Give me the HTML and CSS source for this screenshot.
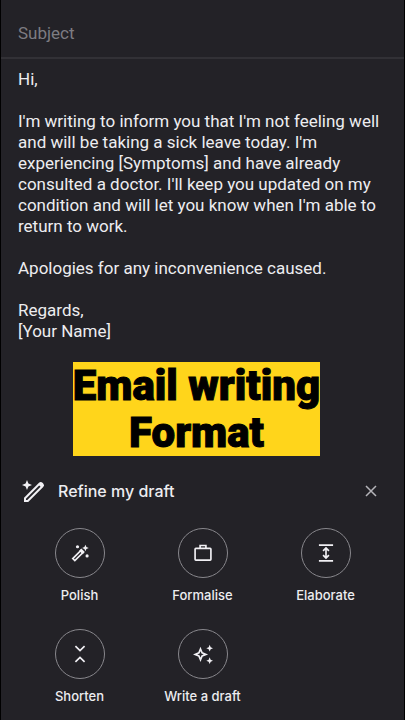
FILE: index.html
```html
<!DOCTYPE html>
<html lang="en">
<head>
<meta charset="utf-8">
<meta name="viewport" content="width=device-width, initial-scale=1">
<title>Compose</title>
<link rel="stylesheet" href="styles.css">
</head>
<body>
<main class="compose">
  <div class="subject">
    <input class="subject-input" type="text" placeholder="Subject" aria-label="Subject">
  </div>
  <textarea class="message" rows="13" aria-label="Message" spellcheck="false">Hi,

I'm writing to inform you that I'm not feeling well and will be taking a sick leave today. I'm experiencing [Symptoms] and have already consulted a doctor. I'll keep you updated on my condition and will let you know when I'm able to return to work.

Apologies for any inconvenience caused.

Regards,
[Your Name]</textarea>
  <div class="caption-row">
    <h1 class="caption">Email writing<br>Format</h1>
  </div>
  <section class="refine" aria-labelledby="refine-title">
    <header class="refine-head">
      <svg class="refine-icon" viewBox="0 0 24 24" aria-hidden="true">
        <path class="solid" d="M5 1 6.400 4.600 10 6 6.400 7.400 5 11 3.600 7.400 0 6 3.600 4.600z"/>
        <path class="line" d="M3 19.200 17.700 4.500a1.500 1.500 0 0 1 2.100 0l.7.7a1.500 1.500 0 0 1 0 2.100L5.800 22H3z"/>
        <path class="solid" d="m16.500 5.700 2.300-2.300 3.100 3.100-2.300 2.300z"/>
      </svg>
      <h2 class="refine-title" id="refine-title">Refine my draft</h2>
      <button class="close" type="button" aria-label="Close">
        <svg class="close-icon" viewBox="0 0 12 12" aria-hidden="true"><path d="m1 1 10 10M11 1 1 11"/></svg>
      </button>
    </header>
    <div class="actions">
      <button class="action" type="button">
        <span class="ring"><svg class="icon" viewBox="0 0 24 24" aria-hidden="true">
          <path class="line" d="m3.300 18.700 9.800-9.800 2.500 2.500-9.800 9.800z"/>
          <path class="solid" d="m11 9.300 2.600-2.600 4.200 4.200-2.600 2.600zM18.500 2l1.200 2.800L22.500 6l-2.800 1.200L18.500 10l-1.200-2.800L14.500 6l2.800-1.200z"/>
          <circle class="solid" cx="9" cy="4.500" r="1.900"/><circle class="solid" cx="20.500" cy="15.500" r="1.900"/>
        </svg></span>
        <span>Polish</span>
      </button>
      <button class="action" type="button">
        <span class="ring"><svg class="icon" viewBox="0 0 24 24" aria-hidden="true">
          <rect class="line" x="2.500" y="6.500" width="19" height="14" rx="1"/>
          <path class="line" d="M8.500 6.500v-3.500h7v3.500"/>
        </svg></span>
        <span>Formalise</span>
      </button>
      <button class="action" type="button">
        <span class="ring"><svg class="icon" viewBox="0 0 24 24" aria-hidden="true">
          <path class="line" d="M3.500 2.500h17M3.500 21.500h17M12 6.500v11M8.500 9.500 12 6l3.500 3.500M8.500 14.500 12 18l3.500-3.500"/>
        </svg></span>
        <span>Elaborate</span>
      </button>
      <button class="action" type="button">
        <span class="ring"><svg class="icon" viewBox="0 0 24 24" aria-hidden="true">
          <path class="line" d="m6.500 2.500 5.500 5.500 5.500-5.500M6.500 21.500 12 16l5.500 5.500"/>
        </svg></span>
        <span>Shorten</span>
      </button>
      <button class="action" type="button">
        <span class="ring"><svg class="icon" viewBox="0 0 24 24" aria-hidden="true">
          <path class="line" d="m9 6 1.900 4.600L15.500 12.500l-4.600 1.900L9 19l-1.900-4.600L2.500 12.500l4.600-1.900z"/>
          <path class="solid" d="m20 1 1.200 2.800L24 5l-2.800 1.200L20 9l-1.200-2.800L16 5l2.800-1.200zM20 16l1.200 2.800L24 20l-2.800 1.200L20 24l-1.200-2.800L16 20l2.800-1.200z"/>
        </svg></span>
        <span>Write a draft</span>
      </button>
    </div>
  </section>
</main>
</body>
</html>
```
FILE: styles.css
```css
* {
  box-sizing: border-box;
}

body {
  margin: 0;
  background: #232227;
  color: #ededf0;
  font-family: Inter, "Liberation Sans", sans-serif;
}

button,
input,
textarea {
  margin: 0;
  padding: 0;
  border: 0;
  background: none;
  color: inherit;
  font: inherit;
}

.compose {
  min-height: 100vh;
  border: solid #000;
  border-width: 0 1px;
}

.subject {
  padding: 21px 17px 13px;
  border-bottom: 2px solid #323136;
}

.subject-input {
  display: block;
  width: 100%;
  height: 23px;
  font-family: Roboto, "Liberation Sans", sans-serif;
  font-size: 17px;
}

.subject-input::placeholder {
  color: #7d7c82;
  opacity: 1;
}

.message {
  display: block;
  width: 100%;
  padding: 10px 17px 0;
  overflow: hidden;
  resize: none;
  font-family: Roboto, "Liberation Sans", sans-serif;
  font-size: 17px;
  line-height: 21px;
}

.caption-row {
  display: flex;
  justify-content: center;
  padding: 20px 12px 0 0;
}

.caption {
  margin: 0;
  background: #ffd51b;
  color: #000;
  font-family: Roboto, "Liberation Sans", sans-serif;
  font-size: 42px;
  font-weight: 900;
  line-height: 47px;
  text-align: center;
  -webkit-text-stroke: 1px #000;
}

.refine {
  padding: 23px 17px 0;
}

.refine-head {
  display: flex;
  align-items: center;
  gap: 12px;
  padding: 0 4px;
}

.refine-icon {
  width: 24px;
  height: 24px;
}

.refine-title {
  flex: 1;
  margin: 0;
  font-size: 16px;
  font-weight: 500;
  line-height: 24px;
}

.close {
  display: grid;
  place-items: center;
  width: 24px;
  height: 24px;
}

.close-icon {
  width: 12px;
  height: 12px;
  fill: none;
  stroke: #b5b4b9;
  stroke-width: 1.5;
}

.actions {
  display: grid;
  grid-template-columns: repeat(3, 1fr);
  row-gap: 25px;
  padding-top: 25px;
}

.action {
  display: flex;
  flex-direction: column;
  align-items: center;
  gap: 9px;
  font-size: 13px;
  font-weight: 500;
  line-height: 17px;
}

.ring {
  display: grid;
  place-items: center;
  width: 50px;
  height: 50px;
  border: 1px solid #88878c;
  border-radius: 50%;
}

.icon {
  width: 20px;
  height: 20px;
}

.line {
  fill: none;
  stroke: #f1f0f4;
  stroke-width: 2;
}

.solid {
  fill: #f1f0f4;
}
```
